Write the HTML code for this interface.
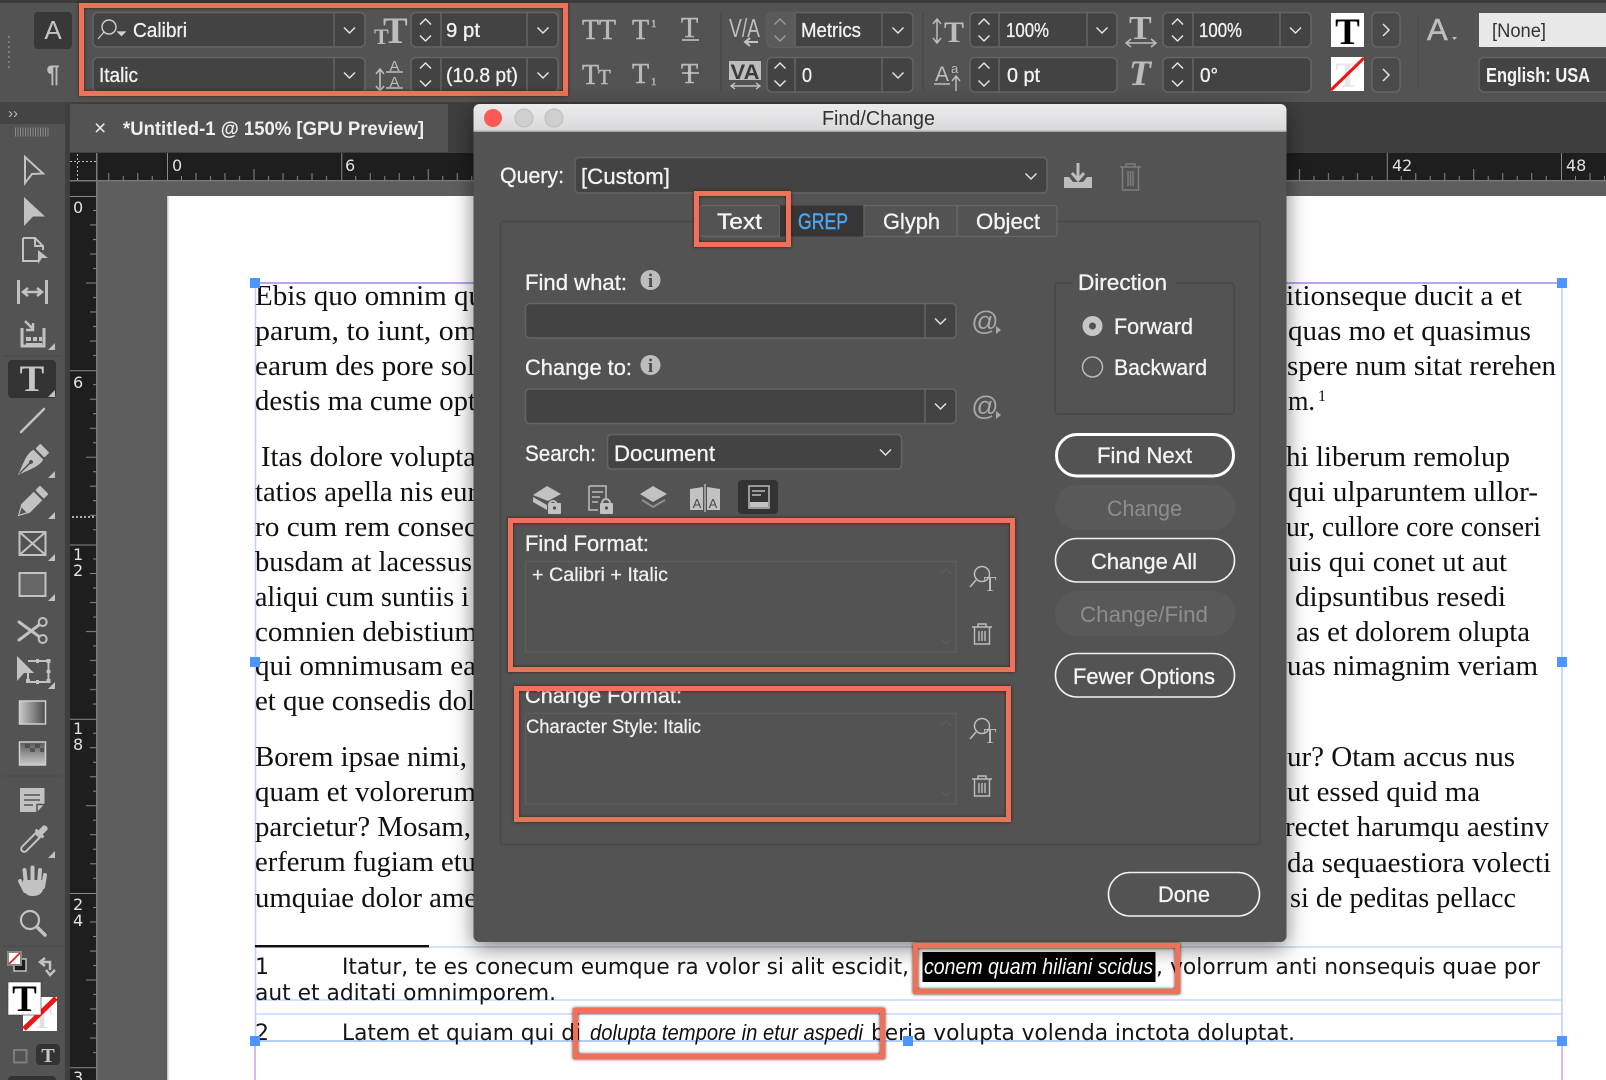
<!DOCTYPE html>
<html lang="en">
<head>
<meta charset="utf-8">
<title>Find/Change</title>
<style>
html,body{margin:0;padding:0;background:#535353;width:1606px;height:1080px;overflow:hidden}
svg{display:block;position:absolute;left:0;top:0}
text{font-family:"Liberation Sans",sans-serif;white-space:pre}
.ui{fill:#f2f2f2;font-size:20px;stroke:#f2f2f2;stroke-width:.3}
.lg{fill:#f4f4f4;font-size:22px;stroke:#f4f4f4;stroke-width:.3}
.dim{fill:#8d8d8d;font-size:22px}
.sm{fill:#f0f0f0;font-size:19px;stroke:#f0f0f0;stroke-width:.25}
.m{font-family:"Liberation Serif",serif;font-size:28px;fill:#111}
.f{font-family:"DejaVu Sans",sans-serif;font-size:22px;fill:#151515}
.fi{font-family:"Liberation Sans",sans-serif;font-style:italic;font-size:22px}
.r{font-family:"DejaVu Sans",sans-serif;font-size:16px;fill:#e2e2e2}
.ic{fill:none;stroke:#c2c2c2;stroke-width:2}
.fl{fill:#c2c2c2}
.g{fill:#434343;stroke:#646464;stroke-width:1.5}
.dv{stroke:#646464;stroke-width:1.5}
.st{font-family:"Liberation Serif",serif;fill:#bdbdbd;font-weight:bold}
.sv text{font-family:"Liberation Serif",serif;stroke:#b9b9b9;stroke-width:.5}
.red{fill:none;stroke:#ee7259;stroke-width:5;filter:drop-shadow(0 .5px 1.5px #3e170d)}
.btn{fill:none;stroke:#f2f2f2;stroke-width:1.6}
.hd{fill:#4d96ff}
.bl{stroke:#b9d2ff;stroke-width:1.6}
</style>
</head>
<body>
<svg width="1606" height="1080" viewBox="0 0 1606 1080" xmlns="http://www.w3.org/2000/svg">
<defs>
<path id="cd" d="M-5.5 -2.5 L0 3 L5.5 -2.5" fill="none" stroke="#e2e2e2" stroke-width="1.5"/>
<path id="cu" d="M-5.5 2.5 L0 -3 L5.5 2.5" fill="none" stroke="#e2e2e2" stroke-width="1.5"/>
<pattern id="vr" x="70" y="196" width="27" height="174.25" patternUnits="userSpaceOnUse">
<path d="M0 .5H27M23 14.5H27M20 29H27M23 43.5H27M20 58H27M23 72.5H27M16 87H27M23 101.5H27M20 116H27M23 130.5H27M20 145H27M23 159.5H27" stroke="#8a8a8a" stroke-width="1" fill="none"/>
</pattern>
<pattern id="hr" x="167" y="153" width="174.25" height="27" patternUnits="userSpaceOnUse">
<path d="M.5 0V27M14.5 23V27M29 20V27M43.5 23V27M58 20V27M72.5 23V27M87 16V27M101.5 23V27M116 20V27M130.5 23V27M145 20V27M159.5 23V27" stroke="#8a8a8a" stroke-width="1" fill="none"/>
</pattern>
<linearGradient id="gh" x1="0" x2="1" y1="0" y2="0"><stop offset="0" stop-color="#c9c9c9"/><stop offset="1" stop-color="#4a4a4a"/></linearGradient>
<linearGradient id="gv" x1="0" x2="0" y1="0" y2="1"><stop offset="0" stop-color="#5a5a5a"/><stop offset="1" stop-color="#c9c9c9"/></linearGradient>
<linearGradient id="tb" x1="0" x2="0" y1="0" y2="1"><stop offset="0" stop-color="#ececec"/><stop offset="1" stop-color="#d9d8dc"/></linearGradient>
<filter id="sh" x="-10%" y="-10%" width="120%" height="125%"><feDropShadow dx="0" dy="6" stdDeviation="11" flood-color="#000" flood-opacity=".5"/></filter>
</defs>

<!-- base -->
<rect width="1606" height="1080" fill="#535353"/>
<rect width="1606" height="3" fill="#3b3b3b"/>
<rect y="102" width="1606" height="51" fill="#3e3e3e"/>
<rect x="0" y="102" width="66" height="22" fill="#444"/>
<rect x="0" y="124" width="66" height="956" fill="#535353"/>
<rect x="65" y="102" width="5" height="978" fill="#3f3f3f"/>
<rect x="70" y="104" width="378" height="48" fill="#535353"/>

<!-- rulers -->
<rect x="70" y="153" width="1536" height="27" fill="#1e1e1e"/>
<rect x="70" y="153" width="1536" height="27" fill="url(#hr)"/>
<rect x="70" y="153" width="27" height="28" fill="#1e1e1e"/>
<rect x="70" y="180" width="27" height="900" fill="#1e1e1e"/>
<rect x="70" y="196" width="27" height="884" fill="url(#vr)"/>
<rect x="70" y="180" width="1536" height="1.5" fill="#7a7a7a"/>
<rect x="96" y="153" width="1.5" height="927" fill="#7a7a7a"/>
<path d="M70 161.5H96M77.5 154V180" stroke="#bbb" stroke-dasharray="2 2" fill="none"/>
<path d="M72 517H95" stroke="#ddd" stroke-width="1.5" stroke-dasharray="2 2" fill="none"/>
<text class="r" x="172" y="171">0</text>
<text class="r" x="345" y="171">6</text>
<text class="r" x="1392" y="171">42</text>
<text class="r" x="1566" y="171">48</text>
<text class="r" x="73" y="213">0</text>
<text class="r" x="73" y="388">6</text>
<text class="r" x="73" y="560">1</text><text class="r" x="73" y="576">2</text>
<text class="r" x="73" y="734">1</text><text class="r" x="73" y="750">8</text>
<text class="r" x="73" y="910">2</text><text class="r" x="73" y="926">4</text>
<text class="r" x="73" y="1083">3</text>

<!-- pasteboard + page -->
<rect x="97.5" y="182" width="1509" height="898" fill="#5e5e5e"/>
<rect x="167" y="196" width="1.500" height="884" fill="#c9c9c9"/>
<rect x="168.500" y="196" width="1438" height="884" fill="#fff"/>

<!-- page frames -->
<path d="M255.500 283H1562" stroke="#c05fe0" stroke-width="1.4"/>
<path d="M255.500 283H1562" stroke="#8fa8ff" stroke-width=".7"/>
<path d="M255.500 283V1041M1562 283V1041" class="bl" fill="none"/>
<path d="M255 1041V1080M1562 1041V1080" stroke="#cfa6f0" stroke-width="1.6" fill="none"/>
<path d="M255 947H1562M255 1000H1562M255 1014H1562" stroke="#c4d8ff" stroke-width="1.6" fill="none"/>
<path d="M255 1041H1562" stroke="#a9c8ff" stroke-width="1.8" fill="none"/>
<rect x="255" y="945" width="174" height="2.400" fill="#111"/>

<!-- body text left -->
<text class="m" x="255" y="305" textLength="228" lengthAdjust="spacingAndGlyphs">Ebis quo omnim qu</text>
<text class="m" x="255" y="340" textLength="222" lengthAdjust="spacingAndGlyphs">parum, to iunt, om</text>
<text class="m" x="255" y="375" textLength="220" lengthAdjust="spacingAndGlyphs">earum des pore sol</text>
<text class="m" x="255" y="410" textLength="221" lengthAdjust="spacingAndGlyphs">destis ma cume opt</text>
<text class="m" x="261" y="466" textLength="215" lengthAdjust="spacingAndGlyphs">Itas dolore volupta</text>
<text class="m" x="255" y="501" textLength="222" lengthAdjust="spacingAndGlyphs">tatios apella nis eur</text>
<text class="m" x="255" y="536" textLength="222" lengthAdjust="spacingAndGlyphs">ro cum rem consec</text>
<text class="m" x="255" y="571" textLength="217" lengthAdjust="spacingAndGlyphs">busdam at lacessus</text>
<text class="m" x="255" y="606" textLength="214" lengthAdjust="spacingAndGlyphs">aliqui cum suntiis i</text>
<text class="m" x="255" y="641" textLength="222" lengthAdjust="spacingAndGlyphs">comnien debistium</text>
<text class="m" x="255" y="675" textLength="221" lengthAdjust="spacingAndGlyphs">qui omnimusam ea</text>
<text class="m" x="255" y="710" textLength="220" lengthAdjust="spacingAndGlyphs">et que consedis dol</text>
<text class="m" x="255" y="766" textLength="212" lengthAdjust="spacingAndGlyphs">Borem ipsae nimi,</text>
<text class="m" x="255" y="801" textLength="221" lengthAdjust="spacingAndGlyphs">quam et volorerum</text>
<text class="m" x="255" y="836" textLength="216" lengthAdjust="spacingAndGlyphs">parcietur? Mosam,</text>
<text class="m" x="255" y="871" textLength="221" lengthAdjust="spacingAndGlyphs">erferum fugiam etu</text>
<text class="m" x="255" y="907" textLength="222" lengthAdjust="spacingAndGlyphs">umquiae dolor ame</text>

<!-- body text right -->
<text class="m" x="1286" y="305" textLength="236" lengthAdjust="spacingAndGlyphs">itionseque ducit a et</text>
<text class="m" x="1288" y="340" textLength="243" lengthAdjust="spacingAndGlyphs">quas mo et quasimus</text>
<text class="m" x="1287" y="375" textLength="269" lengthAdjust="spacingAndGlyphs">spere num sitat rerehen</text>
<text class="m" x="1288" y="410" textLength="27" lengthAdjust="spacingAndGlyphs">m.</text>
<text class="m" x="1318" y="401" style="font-size:16px">1</text>
<text class="m" x="1286" y="466" textLength="224" lengthAdjust="spacingAndGlyphs">hi liberum remolup</text>
<text class="m" x="1288" y="501" textLength="250" lengthAdjust="spacingAndGlyphs">qui ulparuntem ullor-</text>
<text class="m" x="1286" y="536" textLength="255" lengthAdjust="spacingAndGlyphs">ur, cullore core conseri</text>
<text class="m" x="1288" y="571" textLength="219" lengthAdjust="spacingAndGlyphs">uis qui conet ut aut</text>
<text class="m" x="1295" y="606" textLength="211" lengthAdjust="spacingAndGlyphs">dipsuntibus resedi</text>
<text class="m" x="1296" y="641" textLength="234" lengthAdjust="spacingAndGlyphs">as et dolorem olupta</text>
<text class="m" x="1287" y="675" textLength="251" lengthAdjust="spacingAndGlyphs">uas nimagnim veriam</text>
<text class="m" x="1287" y="766" textLength="228" lengthAdjust="spacingAndGlyphs">ur? Otam accus nus</text>
<text class="m" x="1287" y="801" textLength="193" lengthAdjust="spacingAndGlyphs">ut essed quid ma</text>
<text class="m" x="1285" y="836" textLength="264" lengthAdjust="spacingAndGlyphs">rectet harumqu aestinv</text>
<text class="m" x="1287" y="872" textLength="264" lengthAdjust="spacingAndGlyphs">da sequaestiora volecti</text>
<text class="m" x="1290" y="907" textLength="226" lengthAdjust="spacingAndGlyphs">si de peditas pellacc</text>

<!-- footnotes -->
<text class="f" x="255" y="974">1</text>
<text class="f" x="342" y="974" textLength="567" lengthAdjust="spacingAndGlyphs">Itatur, te es conecum eumque ra volor si alit escidit,</text>
<rect x="922.500" y="952" width="233" height="30" fill="#000"/>
<text class="fi" x="924" y="974" fill="#fff" textLength="229" lengthAdjust="spacingAndGlyphs">conem quam hiliani scidus</text>
<text class="f" x="1156" y="974">,</text>
<text class="f" x="1170" y="974" textLength="370" lengthAdjust="spacingAndGlyphs">volorrum anti nonsequis quae por</text>
<text class="f" x="255" y="1000" textLength="301" lengthAdjust="spacingAndGlyphs">aut et aditati omnimporem.</text>
<text class="f" x="255" y="1040">2</text>
<text class="f" x="342" y="1040" textLength="239" lengthAdjust="spacingAndGlyphs">Latem et quiam qui di</text>
<text class="fi" x="590" y="1040" fill="#111" textLength="273" lengthAdjust="spacingAndGlyphs">dolupta tempore in etur aspedi</text>
<text class="f" x="871" y="1040" textLength="424" lengthAdjust="spacingAndGlyphs">beria volupta volenda inctota doluptat.</text>

<!-- handles -->
<rect class="hd" x="250" y="278" width="10" height="10"/>
<rect class="hd" x="1557" y="278" width="10" height="10"/>
<rect class="hd" x="250" y="657" width="10" height="10"/>
<rect class="hd" x="1557" y="657" width="10" height="10"/>
<rect class="hd" x="250" y="1036" width="10" height="10"/>
<rect class="hd" x="903" y="1036" width="10" height="10"/>
<rect class="hd" x="1557" y="1036" width="10" height="10"/>

<!-- doc tab -->
<text x="94" y="135" fill="#e8e8e8" style="font-size:21px">×</text>
<text x="123" y="135" fill="#efefef" style="font-size:19px;font-weight:bold" textLength="301" lengthAdjust="spacingAndGlyphs">*Untitled-1 @ 150% [GPU Preview]</text>

<!-- TOP PANEL -->
<path d="M9 36V68" stroke="#7a7a7a" stroke-width="2" stroke-dasharray="2 3"/>
<rect x="34" y="12" width="38" height="37" rx="4" fill="#383838"/>
<text x="53" y="39" text-anchor="middle" fill="#c4c4c4" style="font-size:26px">A</text>
<text x="53" y="82" text-anchor="middle" fill="#bdbdbd" style="font-size:24px;font-weight:bold">¶</text>

<!-- font fields -->
<rect class="g" x="93" y="12.500" width="272" height="34.500" rx="5"/>
<path class="dv" d="M334 13V47"/>
<use href="#cd" x="349.500" y="30"/>
<circle cx="109" cy="27" r="7" fill="none" stroke="#d0d0d0" stroke-width="1.4"/>
<path d="M104 32L98 39M118 32H125L121.500 35.500Z" stroke="#d0d0d0" stroke-width="1.2" fill="#d0d0d0"/>
<text class="ui" x="133" y="37" textLength="54" lengthAdjust="spacingAndGlyphs">Calibri</text>
<rect class="g" x="93" y="57.500" width="272" height="34.500" rx="5"/>
<path class="dv" d="M334 58V92"/>
<use href="#cd" x="349.500" y="75"/>
<text class="ui" x="99" y="82" textLength="39" lengthAdjust="spacingAndGlyphs">Italic</text>

<!-- size -->
<text class="st" x="374" y="44" style="font-size:22px">T</text>
<text class="st" x="383" y="43" style="font-size:37px">T</text>
<rect class="g" x="411" y="12.500" width="147" height="34.500" rx="5"/>
<path class="dv" d="M441 13V47M527 13V47"/>
<use href="#cu" x="425.500" y="22"/><use href="#cd" x="425.500" y="38"/><use href="#cd" x="543" y="30"/>
<text class="ui" x="446" y="37" textLength="34" lengthAdjust="spacingAndGlyphs">9 pt</text>
<g fill="none" stroke="#bdbdbd" stroke-width="1.6">
<path d="M380 70V90M376 74L380 69L384 74M376 86L380 91L384 86" />
<path d="M386 72H403M386 88H403"/>
</g>
<text x="394.500" y="71" text-anchor="middle" fill="#bdbdbd" style="font-size:15px">A</text>
<text x="394.500" y="87" text-anchor="middle" fill="#bdbdbd" style="font-size:15px">A</text>
<rect class="g" x="411" y="57.500" width="147" height="34.500" rx="5"/>
<path class="dv" d="M441 58V92M527 58V92"/>
<use href="#cu" x="425.500" y="66"/><use href="#cd" x="425.500" y="83"/><use href="#cd" x="543" y="75"/>
<text class="ui" x="446" y="82" textLength="72" lengthAdjust="spacingAndGlyphs">(10.8 pt)</text>

<!-- text style icons -->
<g class="sv">
<text x="582" y="39" style="font-size:28px" textLength="34" lengthAdjust="spacingAndGlyphs" fill="#b9b9b9">TT</text>
<text x="632" y="39" style="font-size:28px" fill="#b9b9b9">T</text>
<text x="651" y="27" style="font-size:11px" fill="#b9b9b9">1</text>
<text x="681" y="37" style="font-size:28px" fill="#b9b9b9">T</text>
<text x="582" y="84" style="font-size:28px" fill="#b9b9b9">T</text>
<text x="598" y="84" style="font-size:21px" fill="#b9b9b9">T</text>
<text x="632" y="83" style="font-size:28px" fill="#b9b9b9">T</text>
<text x="651" y="85" style="font-size:11px" fill="#b9b9b9">1</text>
<text x="681" y="83" style="font-size:28px" fill="#b9b9b9">T</text>
</g>
<path d="M682 40H699M682 73H699" stroke="#c8c8c8" stroke-width="1.6"/>
<path d="M721 13V91" stroke="#4b4b4b" stroke-width="1.5"/>

<!-- kerning -->
<text x="729" y="37" fill="#bdbdbd" style="font-size:26px" textLength="31" lengthAdjust="spacingAndGlyphs">V/A</text>
<path d="M758 42H746M750 38L745 42L750 46" fill="none" stroke="#c4c4c4" stroke-width="2"/>
<rect x="729" y="61" width="32" height="19" fill="#bdbdbd"/>
<text x="745" y="79" text-anchor="middle" fill="#3b3b3b" style="font-size:21px;font-weight:bold" textLength="29" lengthAdjust="spacingAndGlyphs">VA</text>
<path d="M731 86H760M735 83L731 86L735 89M756 83L760 86L756 89" fill="none" stroke="#c4c4c4" stroke-width="1.4"/>
<rect x="767" y="12.500" width="146" height="34.500" rx="5" fill="#434343" stroke="#646464" stroke-width="1.500"/>
<path d="M767 17a5 5 0 0 1 5-5H795V47H772a5 5 0 0 1-5-5Z" fill="#5a5a5a"/>
<path class="dv" d="M795 13V47M882 13V47"/>
<use href="#cu" x="780" y="22" opacity=".45"/><use href="#cd" x="780" y="38" opacity=".45"/><use href="#cd" x="898" y="30"/>
<text class="ui" x="801" y="37" textLength="60" lengthAdjust="spacingAndGlyphs">Metrics</text>
<rect class="g" x="767" y="57.500" width="146" height="34.500" rx="5"/>
<path class="dv" d="M795 58V92M882 58V92"/>
<use href="#cu" x="780" y="66"/><use href="#cd" x="780" y="83"/><use href="#cd" x="898" y="75"/>
<text class="ui" x="802" y="82" textLength="10" lengthAdjust="spacingAndGlyphs">0</text>
<path d="M923 13V91" stroke="#4b4b4b" stroke-width="1.5"/>

<!-- vertical scale -->
<path d="M937 20V42M933 24L937 19L941 24M933 38L937 43L941 38" fill="none" stroke="#bdbdbd" stroke-width="1.5"/>
<text class="st" x="944" y="42" style="font-size:30px">T</text>
<rect class="g" x="970" y="12.500" width="147" height="34.500" rx="5"/>
<path class="dv" d="M999 13V47M1087 13V47"/>
<use href="#cu" x="984" y="22"/><use href="#cd" x="984" y="38"/><use href="#cd" x="1102" y="30"/>
<text class="ui" x="1006" y="37" textLength="43" lengthAdjust="spacingAndGlyphs">100%</text>
<text x="935" y="81" fill="#bdbdbd" style="font-size:21px">A</text>
<text x="951" y="73" fill="#bdbdbd" style="font-size:13px">a</text>
<path d="M934 84H950M956 91V77M952 81L956 76L960 81" fill="none" stroke="#bdbdbd" stroke-width="1.500"/>
<rect class="g" x="970" y="57.500" width="147" height="34.500" rx="5"/>
<path class="dv" d="M999 58V92"/>
<use href="#cu" x="984" y="66"/><use href="#cd" x="984" y="83"/>
<text class="ui" x="1007" y="82" textLength="33" lengthAdjust="spacingAndGlyphs">0 pt</text>

<!-- horizontal scale -->
<text class="st" x="1129" y="39" style="font-size:34px">T</text>
<path d="M1127 43H1155M1131 39L1126 43L1131 47M1151 39L1156 43L1151 47" fill="none" stroke="#bdbdbd" stroke-width="1.500"/>
<rect class="g" x="1163" y="12.500" width="148" height="34.500" rx="5"/>
<path class="dv" d="M1193 13V47M1280 13V47"/>
<use href="#cu" x="1177.500" y="22"/><use href="#cd" x="1177.500" y="38"/><use href="#cd" x="1295.500" y="30"/>
<text class="ui" x="1199" y="37" textLength="43" lengthAdjust="spacingAndGlyphs">100%</text>
<text x="1129" y="85" fill="#bdbdbd" style="font-family:'Liberation Serif',serif;font-style:italic;font-weight:bold;font-size:36px">T</text>
<rect class="g" x="1163" y="57.500" width="148" height="34.500" rx="5"/>
<path class="dv" d="M1193 58V92"/>
<use href="#cu" x="1177.500" y="66"/><use href="#cd" x="1177.500" y="83"/>
<text class="ui" x="1200" y="82" textLength="18" lengthAdjust="spacingAndGlyphs">0°</text>

<!-- swatches -->
<rect x="1331" y="13" width="33" height="34" fill="#fff"/>
<text x="1347.500" y="44" text-anchor="middle" fill="#000" style="font-family:'Liberation Serif',serif;font-weight:bold;font-size:37px">T</text>
<rect x="1331" y="57" width="33" height="34" fill="#fff"/>
<text x="1347.500" y="87" text-anchor="middle" fill="#e8e8e8" style="font-family:'Liberation Serif',serif;font-weight:bold;font-size:36px">T</text>
<path d="M1331 90L1364 58" stroke="#f01414" stroke-width="3"/>
<rect x="1372" y="12.500" width="28" height="34.500" rx="5" fill="#4a4a4a" stroke="#646464" stroke-width="1.500"/>
<rect x="1372" y="57.500" width="28" height="34.500" rx="5" fill="#4a4a4a" stroke="#646464" stroke-width="1.500"/>
<path d="M1383 24L1389 30L1383 36M1383 69L1389 75L1383 81" fill="none" stroke="#e2e2e2" stroke-width="1.500"/>
<text x="1427" y="40" fill="#bdbdbd" stroke="#bdbdbd" stroke-width=".6" style="font-size:31px">A</text>
<path d="M1452 37h5l-2.500 3z" fill="#bdbdbd"/>
<path d="M1418 13V91" stroke="#4b4b4b" stroke-width="1"/>
<rect x="1479" y="13" width="140" height="34" fill="#e8e8e8"/>
<text x="1492" y="37" fill="#333" style="font-size:19px" textLength="54" lengthAdjust="spacingAndGlyphs">[None]</text>
<rect x="1479" y="57.500" width="140" height="34.500" rx="5" class="g"/>
<text x="1486" y="82" fill="#f4f4f4" style="font-size:20px;font-weight:bold" textLength="104" lengthAdjust="spacingAndGlyphs">English: USA</text>

<!-- red box top -->
<rect class="red" x="81.500" y="5.500" width="484" height="88"/>

<!-- TOOLBAR -->
<text x="8" y="118" fill="#b8b8b8" style="font-size:15px">››</text>
<path d="M15 132H49" stroke="#8a8a8a" stroke-width="9" stroke-dasharray="1 1.500"/>
<path d="M3 356H62M3 776H62M3 946H62" stroke="#4a4a4a" stroke-width="1"/>
<path class="ic" d="M25 157L43 173.500L32 174L25 183Z"/>
<path class="fl" d="M24 197L45 216.500L33 216.500L24 226Z"/>
<path class="ic" d="M23 238H35L43 246V250M35 238V246H43M23 238V261H38"/>
<path class="fl" d="M38 250L48 258L42 258L38 264Z"/>
<path class="fl" d="M17 280h3v24h-3zM45 280h3v24h-3z"/>
<path d="M24 292H41M28 288L23 292L28 296M37 288L42 292L37 296" fill="none" stroke="#c2c2c2" stroke-width="2.500"/>
<path class="ic" style="stroke-width:3" d="M22 328V346H44V328"/>
<path class="fl" d="M26 337h5v4h-5zM33 337h4v4h-4zM39 337h3v4h-3zM26 343h16v2H26z"/>
<path d="M25 321L33 329M33 323V330H26" fill="none" stroke="#c2c2c2" stroke-width="2.400"/>
<path class="fl" d="M48 350L55 343V350Z"/>

<rect x="8" y="360" width="48" height="38" rx="4" fill="#333"/>
<text x="32" y="391" text-anchor="middle" fill="#c6c6c6" style="font-family:'Liberation Serif',serif;font-weight:bold;font-size:37px">T</text>
<path class="fl" d="M48 397L55 390V397Z"/>
<path d="M21 432L44 409" stroke="#c2c2c2" stroke-width="2.500" stroke-linecap="round"/>

<g transform="translate(31 462) rotate(45) scale(1.150)">
<rect class="fl" x="-5.500" y="-17" width="11" height="6" rx="1"/>
<path class="fl" d="M-6 -9H6C8 -2 4 5 0 16C-4 5 -8 -2 -6 -9Z"/>
<path d="M0 14V1" stroke="#535353" stroke-width="1.300"/><circle cx="0" cy="0" r="1.700" fill="#535353"/>
</g>
<path class="fl" d="M48 478L55 471V478Z"/>
<g transform="translate(31 503) rotate(45) scale(1.100)">
<rect class="fl" x="-5.500" y="-17" width="11" height="6" rx="1"/>
<path class="fl" d="M-5.500 -9H5.500V7L0 17L-5.500 7Z"/>
<path d="M-3 9L0 15L3 9Z" fill="#535353"/>
</g>
<path class="fl" d="M48 519L55 512V519Z"/>

<rect x="19.500" y="532" width="26" height="23" class="ic"/>
<path class="ic" d="M20 532.500L45 554.500M45 532.500L20 554.500"/>
<path class="fl" d="M48 561L55 554V561Z"/>
<rect x="19.500" y="573" width="26" height="23" fill="#666" stroke="#c2c2c2" stroke-width="2"/>
<path class="fl" d="M48 601L55 594V601Z"/>

<circle cx="42.700" cy="622" r="4" class="ic"/><circle cx="42.700" cy="639" r="4" class="ic"/>
<path d="M19 622L39 636.500M19 640L39 625" fill="none" stroke="#c2c2c2" stroke-width="3" stroke-linecap="round"/>
<path d="M28 661H48.500V682H28V672" fill="none" stroke="#c2c2c2" stroke-width="2"/>
<path class="fl" d="M36 659h3v4h-3zM46.500 670h4v3h-4zM36 680h3v4h-3zM26 679h4v4h-4zM46.500 679h4v4h-4zM46.500 659h4v4h-4z"/>
<path class="fl" d="M17 656L34 673H24L17 681Z"/>
<path class="fl" d="M48 689L55 682V689Z"/>

<rect x="19.500" y="701" width="26" height="23" fill="url(#gh)" stroke="#cfcfcf" stroke-width="1.500"/>
<rect x="19.500" y="742" width="26" height="23" fill="url(#gv)" stroke="#cfcfcf" stroke-width="1.500"/>
<path d="M25 744h5v4h-5zM35 744h5v4h-5zM30 748h5v4h-5zM40 748h4v4h-4z" fill="#444" opacity=".7"/>

<path class="fl" d="M20 788H44.500V804L37 812H20Z"/>
<path d="M24 795H40M24 800H40M24 805H33" stroke="#535353" stroke-width="1.500" fill="none"/>
<path d="M37 812V804.500H44.500" stroke="#535353" stroke-width="1.500" fill="none"/>

<g transform="translate(32 841) rotate(45)">
<path class="fl" d="M-3 -19a3.500 3.500 0 0 1 6 0V-12H5.500V-9H-5.500V-12H-3Z"/>
<path d="M-3 -8H3V11C3 15 -3 15 -3 11Z" fill="none" stroke="#c2c2c2" stroke-width="2"/>
</g>
<path class="fl" d="M48 858L55 851V858Z"/>

<path d="M26 884L24.500 870M32.500 884V867.500M39 884L40 870M43 887L45 875M25 891L20 881" stroke="#c2c2c2" stroke-width="4" stroke-linecap="round" fill="none"/>
<path class="fl" d="M23 880H44L43 890C41 895 37 896 32 896C27 896 25 893 23 889Z"/>

<circle cx="30" cy="920" r="9" class="ic" style="stroke-width:2.200"/>
<path d="M37 927L45 935" stroke="#c2c2c2" stroke-width="3.500" stroke-linecap="round"/>

<rect x="14" y="959" width="12" height="12" fill="#1d1d1d" stroke="#c2c2c2" stroke-width="1.500"/>
<rect x="8" y="952" width="13" height="13" fill="#fff" stroke="#8a8a8a" stroke-width="2"/>
<path d="M9 964L20 953" stroke="#f01414" stroke-width="1.600"/>
<path d="M50 970V962H41M45 958L40 962L45 966M46 970L50 975L55 970" fill="none" stroke="#c2c2c2" stroke-width="2.500"/>

<rect x="23" y="997" width="34" height="34" fill="#fff"/>
<text x="42" y="1028" text-anchor="middle" fill="#e0e0e0" style="font-family:'Liberation Serif',serif;font-weight:bold;font-size:30px">T</text>
<path d="M24 1029L56 998" stroke="#f01414" stroke-width="5"/>
<rect x="8" y="982" width="33" height="33" fill="#fff" stroke="#444" stroke-width=".6"/>
<text x="24.500" y="1011" text-anchor="middle" fill="#000" style="font-family:'Liberation Serif',serif;font-weight:bold;font-size:37px">T</text>

<rect x="14" y="1050" width="12.500" height="12.500" fill="none" stroke="#7d7d7d" stroke-width="2"/>
<rect x="36" y="1044" width="24" height="21" rx="4" fill="#333"/>
<text x="48" y="1062" text-anchor="middle" fill="#c6c6c6" style="font-family:'Liberation Serif',serif;font-weight:bold;font-size:20px">T</text>
<rect x="8" y="1076" width="48" height="10" rx="4" fill="#333"/>

<!-- DIALOG -->
<g filter="url(#sh)">
<rect x="473.500" y="104" width="813" height="838" rx="6" fill="#535353"/>
</g>
<path d="M473.500 131V110a6 6 0 0 1 6-6H1280.500a6 6 0 0 1 6 6V131Z" fill="url(#tb)"/>
<rect x="473.500" y="130.500" width="813" height="1.500" fill="#a8a8a8"/>
<circle cx="493" cy="118" r="9" fill="#fb5b54"/>
<circle cx="524" cy="118" r="9" fill="#cfcfcf" stroke="#bdbdbd"/>
<circle cx="554" cy="118" r="9" fill="#cfcfcf" stroke="#bdbdbd"/>
<text x="822" y="125" fill="#333" style="font-size:20px" textLength="113" lengthAdjust="spacingAndGlyphs">Find/Change</text>

<text class="lg" x="500" y="183" textLength="64" lengthAdjust="spacingAndGlyphs">Query:</text>
<rect class="g" x="575" y="157.500" width="472" height="35.500" rx="4"/>
<text class="lg" x="581" y="184" textLength="89" lengthAdjust="spacingAndGlyphs">[Custom]</text>
<use href="#cd" x="1031" y="176"/>
<!-- save -->
<path fill="#bdbdbd" d="M1064 177H1069L1073 182H1083L1087 177H1092V188H1064Z"/>
<path d="M1078 163V178M1072 173L1078 180L1084 173" fill="none" stroke="#bdbdbd" stroke-width="3"/>
<!-- trash -->
<g fill="none" stroke="#7d7d7d" stroke-width="1.500">
<path d="M1120 167H1141M1126 167V164H1135V167M1122.500 167V190H1138.500V167M1128 171V186M1130.500 171V186M1133 171V186"/>
</g>

<!-- group box -->
<rect x="500.500" y="221.500" width="759.500" height="623" rx="3" fill="none" stroke="#484848" stroke-width="1.500"/>
<!-- tabs -->
<rect x="700" y="205.500" width="80" height="31" rx="3" fill="#535353" stroke="#666" stroke-width="1.300"/>
<rect x="780" y="205.500" width="84" height="31" fill="#363636"/>
<rect x="864" y="205.500" width="93" height="31" fill="#535353" stroke="#666" stroke-width="1.300"/>
<rect x="957" y="205.500" width="100" height="31" rx="3" fill="#535353" stroke="#666" stroke-width="1.300"/>
<text class="lg" x="717" y="229" textLength="45" lengthAdjust="spacingAndGlyphs">Text</text>
<text x="798" y="229" fill="#4ea5f2" stroke="#4ea5f2" stroke-width=".4" style="font-size:22px" textLength="50" lengthAdjust="spacingAndGlyphs">GREP</text>
<text class="lg" x="883" y="229" textLength="57" lengthAdjust="spacingAndGlyphs">Glyph</text>
<text class="lg" x="976" y="229" textLength="64" lengthAdjust="spacingAndGlyphs">Object</text>

<!-- find what -->
<text class="lg" x="525" y="290" textLength="102" lengthAdjust="spacingAndGlyphs">Find what:</text>
<circle cx="650.500" cy="280" r="10" fill="#bdbdbd"/>
<text x="650.500" y="287" text-anchor="middle" fill="#4a4a4a" style="font-family:'Liberation Serif',serif;font-weight:bold;font-size:19px">i</text>
<rect class="g" x="525.500" y="303.500" width="430.500" height="34.500" rx="4"/>
<path class="dv" d="M925 304V338"/>
<use href="#cd" x="940.500" y="321"/>
<text x="985" y="330" text-anchor="middle" fill="#a8a8a8" style="font-size:27px">@</text>
<path d="M996 326l5 4-5 4z" fill="#a8a8a8"/>

<text class="lg" x="525" y="375" textLength="107" lengthAdjust="spacingAndGlyphs">Change to:</text>
<circle cx="650.500" cy="365" r="10" fill="#bdbdbd"/>
<text x="650.500" y="372" text-anchor="middle" fill="#4a4a4a" style="font-family:'Liberation Serif',serif;font-weight:bold;font-size:19px">i</text>
<rect class="g" x="525.500" y="389" width="430.500" height="34.500" rx="4"/>
<path class="dv" d="M925 389V424"/>
<use href="#cd" x="940.500" y="406"/>
<text x="985" y="415" text-anchor="middle" fill="#a8a8a8" style="font-size:27px">@</text>
<path d="M996 411l5 4-5 4z" fill="#a8a8a8"/>

<text class="lg" x="525" y="461" textLength="71" lengthAdjust="spacingAndGlyphs">Search:</text>
<rect class="g" x="607.500" y="434.500" width="294" height="34.500" rx="4"/>
<text class="lg" x="614" y="461" textLength="101" lengthAdjust="spacingAndGlyphs">Document</text>
<use href="#cd" x="885.500" y="452"/>

<!-- option icons -->
<path class="fl" d="M533 495L547 486L561 494L548 501Z"/>
<path class="fl" d="M533 497L547 505V510L533 502Z"/>
<path d="M549 511V505a4 4 0 0 1 8 0" fill="none" stroke="#bdbdbd" stroke-width="2"/>
<rect class="fl" x="548" y="503" width="13" height="11" rx="1"/>
<circle cx="554.500" cy="508" r="1.600" fill="#535353"/>
<path d="M589 486H606V498M589 486V510H598" fill="none" stroke="#bdbdbd" stroke-width="1.500"/>
<path d="M592 492H603M592 497H600M592 502H598" stroke="#bdbdbd" stroke-width="1.500"/>
<path d="M602 506V503a4 4 0 0 1 8 0V506" fill="none" stroke="#bdbdbd" stroke-width="2"/>
<rect class="fl" x="600" y="503" width="13" height="11" rx="1"/>
<circle cx="606.500" cy="508" r="1.600" fill="#535353"/>
<path class="fl" d="M640 494L653 486L667 494L653 502Z"/>
<path d="M642 500L653 507L665 500" fill="none" stroke="#8f8f8f" stroke-width="2"/>
<path class="fl" d="M690 489L703 487V510L690 510ZM707 487L720 489V510H707Z"/>
<path d="M705 484V512" stroke="#c2c2c2" stroke-width="1.300"/>
<text x="697" y="508" text-anchor="middle" fill="#4a4a4a" style="font-size:13px">A</text>
<text x="713" y="508" text-anchor="middle" fill="#4a4a4a" style="font-size:13px">A</text>
<rect x="738" y="480" width="40" height="34" rx="4" fill="#333"/>
<rect x="749" y="486" width="20" height="22" fill="none" stroke="#bdbdbd" stroke-width="1.500"/>
<path d="M752 491H765M752 495H761M750 503.500H768" stroke="#bdbdbd" stroke-width="1.400"/>
<rect class="fl" x="750" y="502" width="18" height="5"/>

<!-- find format -->
<text class="lg" x="525" y="551" textLength="124" lengthAdjust="spacingAndGlyphs">Find Format:</text>
<rect x="525.500" y="561.500" width="430.500" height="90.500" fill="none" stroke="#5e5e5e" stroke-width="1.200"/>
<text class="sm" x="532" y="581" textLength="136" lengthAdjust="spacingAndGlyphs">+ Calibri + Italic</text>
<path d="M941 574L946 569L951 574M941 639L946 644L951 639" fill="none" stroke="#5e5e5e" stroke-width="1.200"/>
<!-- format icon -->
<circle cx="982" cy="574" r="7.500" fill="none" stroke="#bdbdbd" stroke-width="1.500"/>
<path d="M976 580L970 587" stroke="#bdbdbd" stroke-width="1.500"/>
<text x="990" y="591" text-anchor="middle" class="st" style="font-size:21px;font-weight:normal">T</text>
<g fill="none" stroke="#bdbdbd" stroke-width="1.400">
<path d="M972 627H992M978 627V624H986V627M974.500 627V644H989.500V627M979 631V641M982 631V641M985 631V641"/>
</g>

<!-- change format -->
<text class="lg" x="525" y="703" textLength="157" lengthAdjust="spacingAndGlyphs">Change Format:</text>
<rect x="506" y="680" width="510" height="10" fill="#535353"/>
<rect x="525.500" y="713.500" width="430.500" height="90.500" fill="none" stroke="#5e5e5e" stroke-width="1.200"/>
<text class="sm" x="526" y="733" textLength="175" lengthAdjust="spacingAndGlyphs">Character Style: Italic</text>
<path d="M941 726L946 721L951 726M941 791L946 796L951 791" fill="none" stroke="#5e5e5e" stroke-width="1.200"/>
<circle cx="982" cy="726" r="7.500" fill="none" stroke="#bdbdbd" stroke-width="1.500"/>
<path d="M976 732L970 739" stroke="#bdbdbd" stroke-width="1.500"/>
<text x="990" y="743" text-anchor="middle" class="st" style="font-size:21px;font-weight:normal">T</text>
<g fill="none" stroke="#bdbdbd" stroke-width="1.400">
<path d="M972 779H992M978 779V776H986V779M974.500 779V796H989.500V779M979 783V793M982 783V793M985 783V793"/>
</g>

<!-- direction -->
<rect x="1055" y="283" width="179" height="131" rx="3" fill="none" stroke="#484848" stroke-width="1.500"/>
<rect x="1073" y="276" width="102" height="14" fill="#535353"/>
<text class="lg" x="1078" y="290" textLength="89" lengthAdjust="spacingAndGlyphs">Direction</text>
<circle cx="1092.500" cy="326" r="10" fill="#c6c6c6"/><circle cx="1092.500" cy="326" r="3.500" fill="#535353"/>
<text class="lg" x="1114" y="334" textLength="79" lengthAdjust="spacingAndGlyphs">Forward</text>
<circle cx="1092.500" cy="367" r="10" fill="none" stroke="#b8b8b8" stroke-width="1.500"/>
<text class="lg" x="1114" y="375" textLength="93" lengthAdjust="spacingAndGlyphs">Backward</text>

<!-- buttons -->
<rect x="1056.500" y="434.500" width="177" height="41.500" rx="20.500" fill="none" stroke="#fff" stroke-width="3"/>
<text class="lg" x="1097" y="463" textLength="95" lengthAdjust="spacingAndGlyphs">Find Next</text>
<rect x="1055" y="485" width="180" height="45" rx="22" fill="#595959"/>
<text class="dim" x="1107" y="516" textLength="75" lengthAdjust="spacingAndGlyphs">Change</text>
<rect class="btn" x="1055.500" y="538.500" width="179" height="43.500" rx="21.500"/>
<text class="lg" x="1091" y="569" textLength="106" lengthAdjust="spacingAndGlyphs">Change All</text>
<rect x="1055" y="591" width="180" height="45" rx="22" fill="#595959"/>
<text class="dim" x="1080" y="622" textLength="128" lengthAdjust="spacingAndGlyphs">Change/Find</text>
<rect class="btn" x="1055.500" y="653.500" width="179" height="43.500" rx="21.500"/>
<text class="lg" x="1073" y="684" textLength="142" lengthAdjust="spacingAndGlyphs">Fewer Options</text>
<rect class="btn" x="1108.500" y="872.500" width="151" height="43.500" rx="21.500"/>
<text class="lg" x="1158" y="902" textLength="52" lengthAdjust="spacingAndGlyphs">Done</text>

<!-- red annotation boxes -->
<rect class="red" x="696.500" y="193.500" width="92" height="51"/>
<rect class="red" x="510.500" y="520.500" width="502" height="149"/>
<rect class="red" x="516.500" y="688.500" width="492" height="131"/>
<rect class="red" x="915.500" y="945.500" width="262" height="46"/>
<rect class="red" x="575.500" y="1010.500" width="307" height="46"/>
</svg>
</body>
</html>
